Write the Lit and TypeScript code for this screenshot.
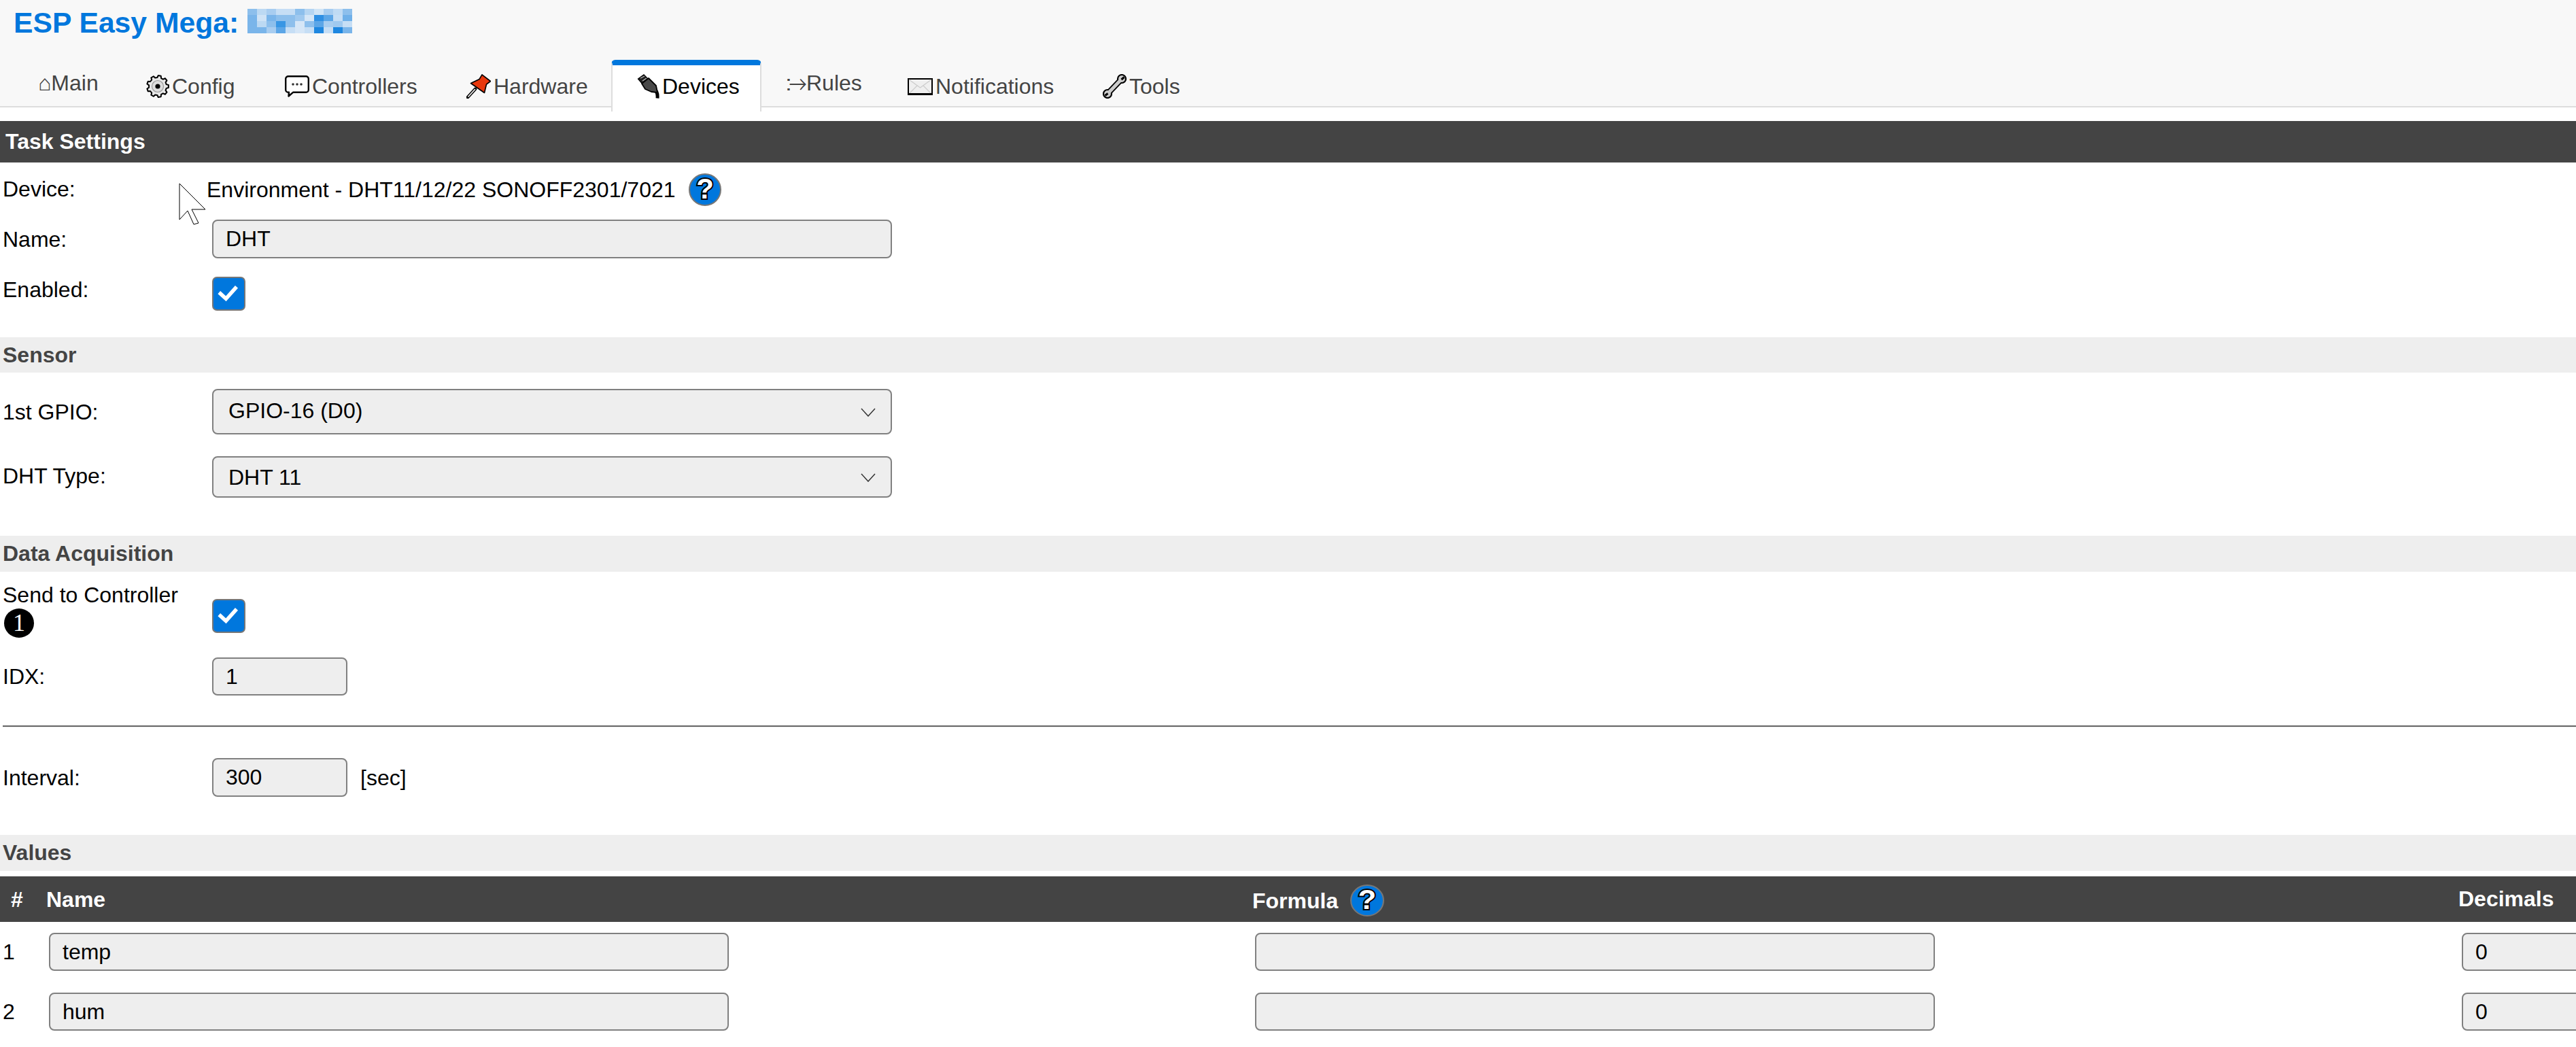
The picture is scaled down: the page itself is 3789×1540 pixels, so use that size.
import { LitElement, html, css } from "lit";
import { customElement } from "lit/decorators.js";

const MOSAIC = [
  ["#8dbfec", "#bcd9f3", "#a8cdf0", "#c6def5", "#c6def5", "#8dbfec", "#b5d5f2", "#d0e4f6", "#a8cdf0", "#c0dbf4", "#8dbfec"],
  ["#7ab5ea", "#cfe3f6", "#7ab5ea", "#8dbfec", "#8dbfec", "#a0c9ef", "#d5e6f7", "#2f8fe3", "#5ca6e7", "#c6def5", "#6fb0e9"],
  ["#7ab5ea", "#bcd9f3", "#8dbfec", "#3896e4", "#8dbfec", "#d5e6f7", "#8dbfec", "#5ca6e7", "#a8cdf0", "#a0c9ef", "#c6def5"],
  ["#7ab5ea", "#7ab5ea", "#a8cdf0", "#5ca6e7", "#c6def5", "#d5e6f7", "#c6def5", "#1e87e0", "#c6def5", "#1e87e0", "#7ab5ea"],
];

function gearPath(cx: number, cy: number, rOut: number, rIn: number, teeth: number) {
  const pts: string[] = [];
  for (let i = 0; i < teeth; i++) {
    const step = (Math.PI * 2) / teeth;
    const a = i * step;
    const corners: [number, number][] = [
      [rIn, a - step * 0.32],
      [rOut, a - step * 0.18],
      [rOut, a + step * 0.18],
      [rIn, a + step * 0.32],
    ];
    for (const [r, t] of corners) {
      pts.push(`${(cx + r * Math.cos(t)).toFixed(2)} ${(cy + r * Math.sin(t)).toFixed(2)}`);
    }
  }
  return "M" + pts.join("L") + "Z";
}

const gearIcon = html`<svg class="ic" width="34" height="34" viewBox="0 0 34 34">
  <path d=${gearPath(17, 17, 16, 13, 9)} fill="#e8e8e8" stroke="#000" stroke-width="2" stroke-linejoin="round"></path>
  <circle cx="17" cy="17" r="8.5" fill="#ddd" stroke="#999" stroke-width="1.2"></circle>
  <circle cx="17" cy="17" r="3.6" fill="#000"></circle>
</svg>`;

const chatIcon = html`<svg class="ic" width="36" height="32" viewBox="0 0 36 32">
  <path d="M5 1.2H31a3.8 3.8 0 0 1 3.8 3.8V21a3.8 3.8 0 0 1-3.8 3.8H12L5.5 30.5 6 24.8H5A3.8 3.8 0 0 1 1.2 21V5A3.8 3.8 0 0 1 5 1.2Z" fill="#fff" stroke="#000" stroke-width="2.4" stroke-linejoin="round"></path>
  <circle cx="12" cy="13" r="1.8" fill="#333"></circle>
  <circle cx="18" cy="13" r="1.8" fill="#333"></circle>
  <circle cx="24" cy="13" r="1.8" fill="#333"></circle>
</svg>`;

const pinIcon = html`<svg class="ic" width="36" height="36" viewBox="0 0 36 36">
  <path d="M2 34 13 22" stroke="#000" stroke-width="4.6" stroke-linecap="round"></path>
  <path d="M2.5 33.5 13 22" stroke="#eee" stroke-width="1.8"></path>
  <path d="M23 .8 35.5 10.5 29.5 15 26.5 27.5 6.5 13.5 19 7.5Z" fill="#e8380d" stroke="#000" stroke-width="1.6" stroke-linejoin="round"></path>
</svg>`;

const plugIcon = html`<svg class="ic" width="33" height="36" viewBox="0 0 33 36">
  <path d="M25 22C30 25 30.5 30 30 35.5" fill="none" stroke="#000" stroke-width="5"></path>
  <path d="M1.5 7 10 .8 18 9 9 16Z" fill="#222" stroke="#000" stroke-width="1.2"></path>
  <path d="M5 6 11 3M8 10 14 6" stroke="#bbb" stroke-width="1.3"></path>
  <path d="M7 14 17 6 28 17 30 27 21 26 12 22Z" fill="#484848" stroke="#000" stroke-width="1.8" stroke-linejoin="round"></path>
</svg>`;

const mailIcon = html`<svg class="ic" width="37" height="25" viewBox="0 0 37 25">
  <rect x="1" y="1" width="35" height="23" fill="#efefef" stroke="#000" stroke-width="2"></rect>
  <path d="M2 23 14 11M35 23 23 11" stroke="#ccc" stroke-width="1.2" fill="none"></path>
  <path d="M2 2 18.5 14 35 2" stroke="#ccc" stroke-width="1.2" fill="none"></path>
  <path d="M1 23.5H36" stroke="#000" stroke-width="3"></path>
</svg>`;

const wrenchIcon = html`<svg class="ic" width="35" height="36" viewBox="0 0 35 36">
  <path d="M7 29 28 7" stroke="#000" stroke-width="8.5"></path>
  <circle cx="7" cy="29" r="6" fill="#ccc" stroke="#000" stroke-width="2.2"></circle>
  <circle cx="28" cy="7" r="6" fill="#ccc" stroke="#000" stroke-width="2.2"></circle>
  <path d="M7 29 28 7" stroke="#ccc" stroke-width="5"></path>
  <path d="M3.5 31.5 7.5 28.5M31.5 4.5 27.5 8" stroke="#000" stroke-width="3"></path>
</svg>`;

const helpIcon = html`<svg class="help" viewBox="0 0 48 48" preserveAspectRatio="none">
  <ellipse cx="24" cy="24" rx="23" ry="23" fill="#07d" stroke="#777" stroke-width="2"></ellipse>
  <text x="24" y="37" text-anchor="middle" class="q">?</text>
</svg>`;

const cursorPts = "1,1 39,39 19,39 29,59 22,61 13,41 1,54";

@customElement("app-root")
export class AppRoot extends LitElement {
  static styles = css`
    :host {
      display: block;
      width: 3789px;
      height: 1540px;
      overflow: hidden;
      background: #fff;
      color: #000;
      font: 32px/36px "Liberation Sans", Arial, sans-serif;
    }
    * { box-sizing: border-box; }
    .top { height: 158px; background: #f8f8f8; border-bottom: 2px solid #ddd; }
    .brand { height: 88px; display: flex; align-items: flex-start; padding: 12px 0 0 20px; gap: 13px; }
    h1 { margin: 0; font-size: 42.67px; line-height: 42px; font-weight: 700; color: #07d; }
    .mosaic { display: grid; grid-template-columns: repeat(11, 14px); grid-auto-rows: 9px; margin-top: 1px; }
    .tabs { display: grid; grid-template-columns: 159px 204px 267px 249px 221px 179px 287px auto; justify-content: start; align-items: start; padding-left: 20px; height: 68px; }
    .tab { height: 68px; padding: 0 0 0 36px; display: flex; align-items: center; color: #444; white-space: nowrap; }
    .tab.em { padding-top: 10px; }
    .tab.active { height: 76px; padding: 0 0 6px 36px; border: 2px solid #ddd; border-top: 8px solid #07d; border-bottom: 0; border-radius: 6px 6px 0 0; background: #fff; color: #000; position: relative; }
    .ic { display: block; flex: none; margin-right: 4px; }
    .bar { margin-top: 20px; height: 61px; background: #444; color: #fff; font-weight: 700; font-size: 32px; line-height: 61px; padding-left: 8px; }
    .row { display: grid; grid-template-columns: 312px 1fr; align-items: start; }
    .label { padding-left: 4px; }
    .r-device { margin-top: 16px; height: 48px; }
    .r-device .label { padding-top: 5px; }
    .r-device .val { display: flex; align-items: flex-start; margin-left: -8px; line-height: 36px; padding-top: 6px; }
    .help { display: block; flex: none; width: 48px; height: 48px; }
    .q { font: 700 42px "Liberation Sans", Arial, sans-serif; fill: #fff; stroke: #000; stroke-width: 4px; paint-order: stroke fill; }
    .r-device .help { margin: -6px 0 0 19px; }
    .r-name { margin-top: 20px; }
    .r-name .label { padding-top: 11px; }
    .r-enabled { margin-top: 27px; height: 50px; }
    .r-enabled .label { padding-top: 1px; }
    input.txt, select { display: block; width: 1000px; background: #eee; border: 2px solid #808080; border-radius: 8px; font: 32px "Liberation Sans", Arial, sans-serif; color: #000; padding: 0 18px; margin: 0; height: 57px; outline: none; }
    input.h56 { height: 56px; }
    input.short { width: 199px; }
    select { appearance: none; -webkit-appearance: none; padding: 0 22px; }
    .sel { position: relative; width: 1000px; }
    .sel svg { position: absolute; right: 24px; top: 50%; margin-top: -6px; }
    .check { width: 49px; height: 50px; border-radius: 7px; background: #07d; border: 2px solid #777; display: block; }
    .sec { height: 52px; background: #eee; color: #444; font-weight: 700; line-height: 52px; padding-left: 4px; }
    .s-sensor { margin-top: 39px; }
    .r-gpio { margin-top: 24px; }
    .r-gpio select { height: 67px; padding-bottom: 4px; }
    .r-gpio .label { padding-top: 16px; }
    .r-dht { margin-top: 32px; }
    .r-dht select { height: 61px; }
    .r-dht .label { padding-top: 11px; }
    .s-data { margin-top: 56px; height: 53px; line-height: 53px; }
    .r-send { height: 90px; margin-top: 16px; }
    .r-send .label { line-height: 36px; }
    .r-send .check { margin-top: 24px; }
    .badge { display: block; width: 44px; height: 43px; margin: 2px 0 0 2px; border-radius: 50%; background: #000; color: #fff; font: 36px/43px "Liberation Serif", serif; text-align: center; }
    .r-idx { margin-top: 20px; }
    .r-idx .label { padding-top: 10px; }
    hr { margin: 44px 0 0 4px; height: 3px; border: 0; border-top: 2px solid #666; border-bottom: 1px solid #eee; }
    .r-int { margin-top: 45px; }
    .r-int .label { padding-top: 11px; }
    .int-val { display: flex; align-items: center; gap: 19px; }
    .s-values { margin-top: 56px; height: 53px; line-height: 53px; }
    .thead { margin-top: 8px; height: 67px; background: #444; color: #fff; font-weight: 700; display: grid; grid-template-columns: 68px 1774px 1774px 1fr; }
    .thead > div { display: flex; align-items: center; white-space: nowrap; }
    .thead .hash { padding-left: 16px; }
    .thead .formula { padding-top: 4px; }
    .thead .formula .help { width: 50px; height: 47px; margin: 0 0 0 18px; }
    .thead .dec { padding-bottom: 2px; }
    .trow { display: grid; grid-template-columns: 72px 1774px 1775px 200px; align-items: center; margin-top: 32px; }
    .trow.first { margin-top: 16px; }
    .trow .n { padding-left: 4px; }
    .trow input.dec { width: 200px; }
    .cursor { position: absolute; left: 263px; top: 269px; }
  `;

  private checkbox() {
    return html`<svg class="check" viewBox="0 0 49 50" width="49" height="50"><path d="M9 23 20 33 37 14" fill="none" stroke="#fff" stroke-width="6"></path></svg>`;
  }

  private input(value: string, cls = "") {
    return html`<input class="txt ${cls}" type="text" .value=${value} />`;
  }

  private select(value: string) {
    return html`<div class="sel">
      <select><option>${value}</option></select>
      <svg width="22" height="13" viewBox="0 0 22 13"><path d="M1 1 11 12 21 1" fill="none" stroke="#333" stroke-width="1.5"></path></svg>
    </div>`;
  }

  private tab(label: string, icon: unknown, cls = "") {
    return html`<div class="tab ${cls}">${icon}${label}</div>`;
  }

  render() {
    return html`
      <header class="top">
        <div class="brand">
          <h1>ESP Easy Mega:</h1>
          <div class="mosaic">
            ${MOSAIC.flat().map((c) => html`<span style="background:${c}"></span>`)}
          </div>
        </div>
        <nav class="tabs">
          ${this.tab("\u2302Main", null)}
          ${this.tab("Config", gearIcon, "em")}
          ${this.tab("Controllers", chatIcon, "em")}
          ${this.tab("Hardware", pinIcon, "em")}
          ${this.tab("Devices", plugIcon, "active")}
          ${this.tab("\u29F4Rules", null)}
          ${this.tab("Notifications", mailIcon, "em")}
          ${this.tab("Tools", wrenchIcon, "em")}
        </nav>
      </header>

      <div class="bar">Task Settings</div>
      <div class="row r-device">
        <div class="label">Device:</div>
        <div class="val">Environment - DHT11/12/22 SONOFF2301/7021${helpIcon}</div>
      </div>
      <div class="row r-name"><div class="label">Name:</div>${this.input("DHT")}</div>
      <div class="row r-enabled"><div class="label">Enabled:</div>${this.checkbox()}</div>

      <div class="sec s-sensor">Sensor</div>
      <div class="row r-gpio"><div class="label">1st GPIO:</div>${this.select("GPIO-16 (D0)")}</div>
      <div class="row r-dht"><div class="label">DHT Type:</div>${this.select("DHT 11")}</div>

      <div class="sec s-data">Data Acquisition</div>
      <div class="row r-send">
        <div class="label">Send to Controller<span class="badge">1</span></div>
        ${this.checkbox()}
      </div>
      <div class="row r-idx"><div class="label">IDX:</div>${this.input("1", "short h56")}</div>
      <hr />
      <div class="row r-int">
        <div class="label">Interval:</div>
        <div class="int-val">${this.input("300", "short")}<span>[sec]</span></div>
      </div>

      <div class="sec s-values">Values</div>
      <div class="thead">
        <div class="hash">#</div>
        <div>Name</div>
        <div class="formula">Formula${helpIcon}</div>
        <div class="dec">Decimals</div>
      </div>
      <div class="trow first">
        <div class="n">1</div>${this.input("temp", "h56")}${this.input("", "h56")}${this.input("0", "dec h56")}
      </div>
      <div class="trow">
        <div class="n">2</div>${this.input("hum", "h56")}${this.input("", "h56")}${this.input("0", "dec h56")}
      </div>

      <svg class="cursor" width="42" height="63" viewBox="0 0 42 63"><polygon points=${cursorPts} fill="#fff" stroke="#000" stroke-width="1"></polygon></svg>
    `;
  }
}
